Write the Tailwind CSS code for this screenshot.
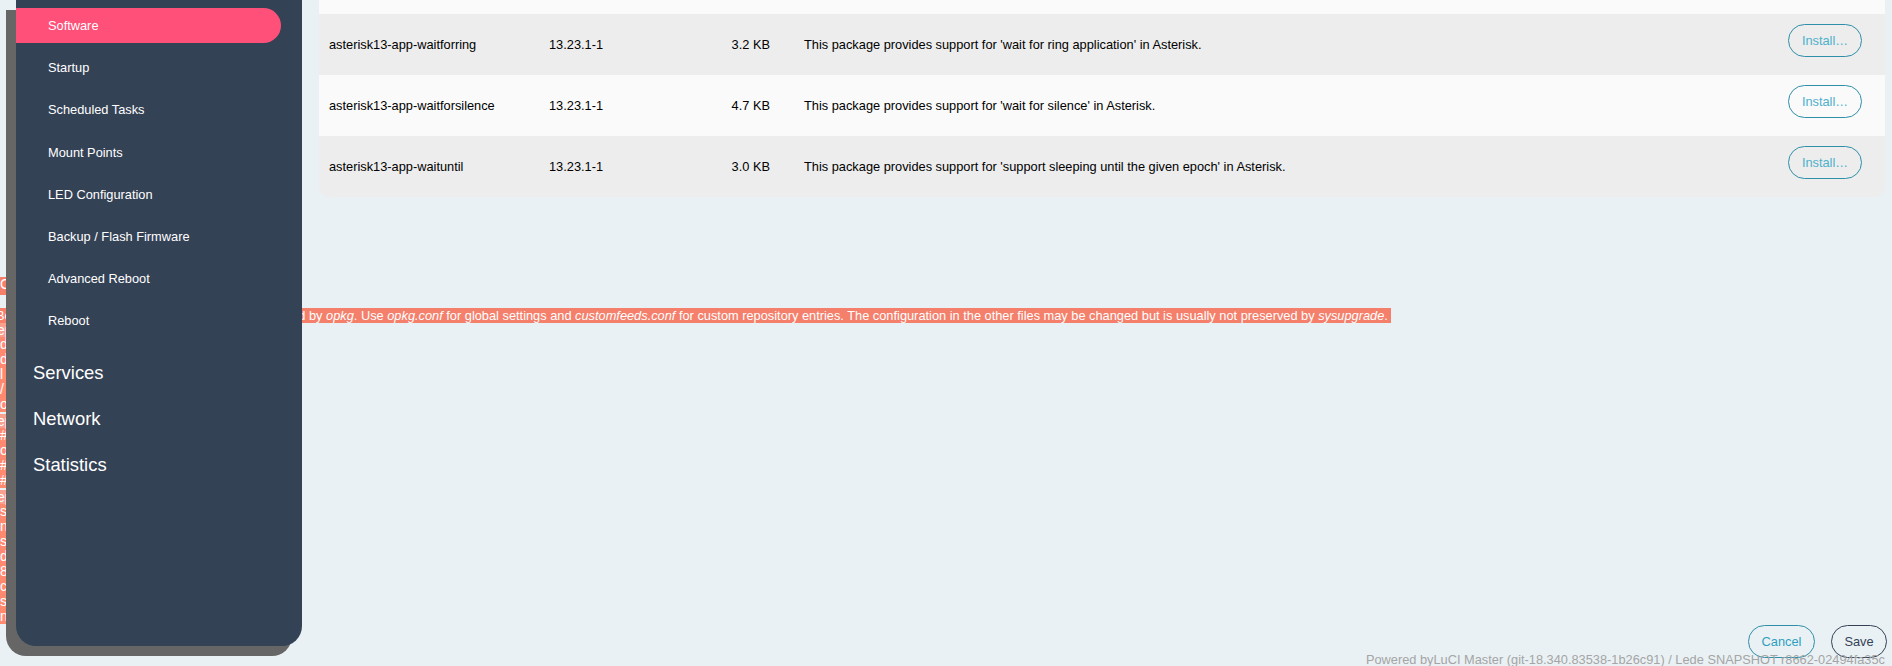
<!DOCTYPE html>
<html lang="en">
<head>
    <meta charset="UTF-8">
    <title>Software - LuCI</title>
    <script src="https://cdn.jsdelivr.net/npm/@tailwindcss/browser@4"></script>
</head>
<body class="bg-[#e9f1f4] font-['Liberation_Sans',Arial,sans-serif] text-[12.8px] text-black">
<div class="relative flex h-[666px] overflow-hidden">

    <!-- wrapped notice squeezed behind the sidebar -->
    <div class="w-[6px] shrink-0 overflow-hidden pt-[277px] text-[14px] leading-[15px] text-white">
        <div class="h-[18px] bg-[#f4806c]">C</div>
        <div class="mt-[13px] bg-[#ff8a70]">
            <div class="h-[15px] border-b border-[#e8705c]">B</div>
            <div class="h-[14px] bg-[#f9a08f]"><span class="-ml-[3px] block">ep</span></div>
            <div class="h-[15px]">d</div>
            <div class="h-[15px]">d</div>
            <div class="h-[15px]">l</div>
            <div class="h-[15px]">/</div>
            <div class="h-[15px]">o</div>
            <div class="h-[2px] bg-[#e9f1f4]"></div>
            <div class="h-[14px] bg-[#f9a08f]"><span class="-ml-[3px] block">ep</span></div>
            <div class="h-[15px]">#</div>
            <div class="h-[15px]">o</div>
            <div class="h-[15px]">#</div>
            <div class="h-[15px]">#</div>
            <div class="h-[2px] bg-[#e9f1f4]"></div>
            <div class="h-[14px] bg-[#f9a08f]"><span class="-ml-[3px] block">ep</span></div>
            <div class="h-[15px]">s</div>
            <div class="h-[15px]">n</div>
            <div class="h-[15px]">s</div>
            <div class="h-[15px]">d</div>
            <div class="h-[15px]">8</div>
            <div class="h-[15px]">c</div>
            <div class="h-[15px]">s</div>
            <div class="h-[15px]">n</div>
        </div>
    </div>

    <!-- Sidebar -->
    <aside class="relative z-10 ml-[10px] h-[646px] w-[286px] shrink-0 rounded-b-[20px] bg-[#344256] text-white shadow-[-10px_10px_0_#666]">
        <ul class="pt-[8px] pr-[21px]">
            <li class="flex h-[35px] items-center rounded-r-[18px] bg-[#ff5079] pl-[32px]">Software</li>
            <li class="mt-[7px] flex h-[35px] items-center pl-[32px]">Startup</li>
            <li class="mt-[7px] flex h-[35px] items-center pl-[32px]">Scheduled Tasks</li>
            <li class="mt-[8px] flex h-[35px] items-center pl-[32px]">Mount Points</li>
            <li class="mt-[7px] flex h-[35px] items-center pl-[32px]">LED Configuration</li>
            <li class="mt-[7px] flex h-[35px] items-center pl-[32px]">Backup / Flash Firmware</li>
            <li class="mt-[7px] flex h-[35px] items-center pl-[32px]">Advanced Reboot</li>
            <li class="mt-[7px] flex h-[35px] items-center pl-[32px]">Reboot</li>
        </ul>
        <ul class="mt-[12px] pl-[17px] text-[18.4px]">
            <li class="flex h-[46px] items-center">Services</li>
            <li class="flex h-[46px] items-center">Network</li>
            <li class="flex h-[46px] items-center">Statistics</li>
        </ul>
    </aside>

    <!-- Main -->
    <main class="relative min-w-0 flex-1 pl-[17px] pr-[7px]">
        <table class="w-full table-fixed overflow-hidden rounded-b-[10px]">
            <colgroup>
                <col class="w-[230px]">
                <col class="w-[160px]">
                <col class="w-[61px]">
                <col>
                <col class="w-[97px]">
            </colgroup>
            <tbody>
                <tr class="h-[14px] bg-[#fafafa]"><td colspan="5"></td></tr>
                <tr class="h-[61px] bg-[#ededed]">
                    <td class="pl-[10px]">asterisk13-app-waitforring</td>
                    <td>13.23.1-1</td>
                    <td class="text-right">3.2 KB</td>
                    <td class="pl-[34px]">This package provides support for 'wait for ring application' in Asterisk.</td>
                    <td><button class="mb-[8px] block h-[33px] w-[74px] rounded-[17px] border border-[#2f8fa8] text-[#4fb0cc]">Install…</button></td>
                </tr>
                <tr class="h-[61px] bg-[#fafafa]">
                    <td class="pl-[10px]">asterisk13-app-waitforsilence</td>
                    <td>13.23.1-1</td>
                    <td class="text-right">4.7 KB</td>
                    <td class="pl-[34px]">This package provides support for 'wait for silence' in Asterisk.</td>
                    <td><button class="mb-[8px] block h-[33px] w-[74px] rounded-[17px] border border-[#2f8fa8] text-[#4fb0cc]">Install…</button></td>
                </tr>
                <tr class="h-[61px] bg-[#ededed]">
                    <td class="pl-[10px]">asterisk13-app-waituntil</td>
                    <td>13.23.1-1</td>
                    <td class="text-right">3.0 KB</td>
                    <td class="pl-[34px]">This package provides support for 'support sleeping until the given epoch' in Asterisk.</td>
                    <td><button class="mb-[8px] block h-[33px] w-[74px] rounded-[17px] border border-[#2f8fa8] text-[#4fb0cc]">Install…</button></td>
                </tr>
            </tbody>
        </table>

        <p class="mt-[111px] -ml-[323px] whitespace-nowrap leading-[15px] text-white"><span class="bg-[#f4806c] pr-[3px]">Below is a listing of the various configuration files used by <em>opkg</em>. Use <em>opkg.conf</em> for global settings and <em>customfeeds.conf</em> for custom repository entries. The configuration in the other files may be changed but is usually not preserved by <em>sysupgrade</em>.</span></p>

        <div class="absolute right-[5px] bottom-[8px] flex gap-[16px]">
            <button class="h-[33px] w-[67px] rounded-[17px] border border-[#2f8fa8] text-[#2f9fc0]">Cancel</button>
            <button class="h-[33px] w-[56px] rounded-[17px] border border-[#344256] text-[#344256]">Save</button>
        </div>
        <p class="absolute right-[7px] bottom-0 whitespace-nowrap text-[12.8px] leading-[13px] text-[#a5a5a5]">Powered by<a>LuCI Master (git-18.340.83538-1b26c91)</a> / Lede SNAPSHOT r8662-02494fa35c</p>
    </main>
</div>
</body>
</html>
